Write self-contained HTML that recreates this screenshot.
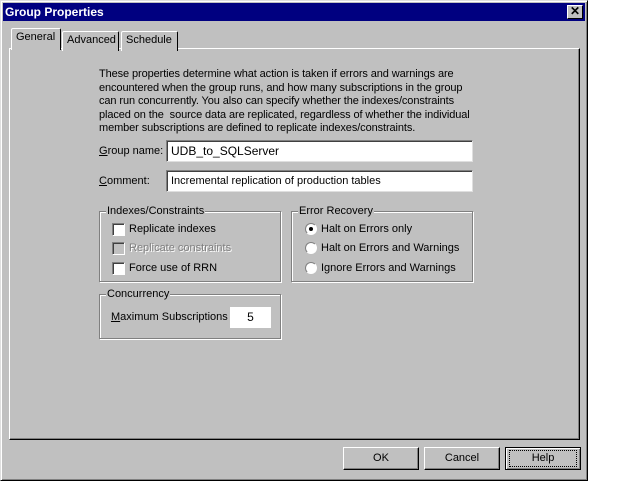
<!DOCTYPE html>
<html><head><style>
*{margin:0;padding:0;box-sizing:border-box}
body{width:640px;height:481px;background:#fff;position:relative;overflow:hidden;font-family:"Liberation Sans",sans-serif;font-size:11px;color:#000}
.a{position:absolute}
.dlg{left:0;top:0;width:588px;height:481px;background:#c0c0c0;border:1px solid #dfdfdf;border-right-color:#000;border-bottom-color:#000;box-shadow:inset 1px 1px #fff,inset -1px -1px #808080}
.title{left:3px;top:3px;width:582px;height:18px;background:#000080;color:#fff;font-weight:bold;font-size:12px;line-height:18px;padding-left:2px}
.close{left:567px;top:5px;width:16px;height:14px;background:#c0c0c0;border:1px solid #fff;border-right-color:#000;border-bottom-color:#000;font-size:12px;line-height:11px;text-align:center;font-weight:bold;color:#000}
.panel{left:9px;top:48px;width:571px;height:392px;border:1px solid #fff;border-right-color:#000;border-bottom-color:#000;box-shadow:inset -1px -1px #808080}
.tab{height:20px;border:1px solid #fff;border-bottom:none;border-right:1px solid #000;border-radius:2px 2px 0 0;padding:0 4px;line-height:17px;background:#c0c0c0}
.in{background:#fff;border:1px solid #808080;border-right-color:#dfdfdf;border-bottom-color:#dfdfdf;box-shadow:inset 1px 1px #404040;padding-left:4px;line-height:18px}
.grp{border:1px solid #808080;box-shadow:1px 1px #fff,inset 1px 1px #fff}
.lg{background:#c0c0c0;padding:0 1px;line-height:12px}
.cb{width:13px;height:13px;background:#fff;border:1px solid #808080;border-right-color:#fff;border-bottom-color:#fff;box-shadow:inset 1px 1px #404040}
.rb{width:12px;height:12px;border-radius:50%;background:#fff;border:1px solid #808080;border-right-color:#fff;border-bottom-color:#fff}
.btn{top:447px;width:76px;height:23px;border:1px solid #fff;border-right-color:#000;border-bottom-color:#000;box-shadow:inset -1px -1px #808080;text-align:center;line-height:21px;font-size:11px}
u{text-decoration:underline}
</style></head><body>
<div class="a dlg"></div>
<div class="a title">Group Properties</div>
<div class="a close">✕</div>
<div class="a panel"></div>
<div class="a tab" style="left:11px;top:28px;height:22px;width:50px;background:#c0c0c0;z-index:2">General</div>
<div class="a tab" style="left:62px;top:31px;width:57px">Advanced</div>
<div class="a tab" style="left:121px;top:31px;width:57px">Schedule</div>
<div class="a" style="left:99px;top:68px;width:380px;line-height:13.5px;letter-spacing:-0.1px">These properties determine what action is taken if errors and warnings are encountered when the group runs, and how many subscriptions in the group can run concurrently. You also can specify whether the indexes/constraints placed on the &nbsp;source data are replicated, regardless of whether the individual member subscriptions are defined to replicate indexes/constraints.</div>
<div class="a" style="left:99px;top:145px"><u>G</u>roup name:</div>
<div class="a in" style="left:166px;top:140px;width:307px;height:22px;font-size:12px;line-height:20px">UDB_to_SQLServer</div>
<div class="a" style="left:99px;top:175px"><u>C</u>omment:</div>
<div class="a in" style="left:166px;top:170px;width:307px;height:22px;line-height:20px">Incremental replication of production tables</div>
<div class="a grp" style="left:99px;top:211px;width:182px;height:71px"></div>
<div class="a lg" style="left:106px;top:205px">Indexes/Constraints</div>
<div class="a cb" style="left:112px;top:223px"></div><div class="a" style="left:129px;top:223px">Replicate indexes</div>
<div class="a cb" style="left:112px;top:242px;background:#c0c0c0"></div><div class="a" style="left:129px;top:242px;color:#808080;text-shadow:1px 1px #fff">Replicate constraints</div>
<div class="a cb" style="left:112px;top:262px"></div><div class="a" style="left:129px;top:262px">Force use of RRN</div>
<div class="a grp" style="left:291px;top:211px;width:182px;height:71px"></div>
<div class="a lg" style="left:298px;top:205px">Error Recovery</div>
<div class="a rb" style="left:305px;top:223px"></div><div class="a" style="left:309px;top:227px;width:4px;height:4px;background:#000;border-radius:50%"></div><div class="a" style="left:321px;top:223px">Halt on Errors only</div>
<div class="a rb" style="left:305px;top:242px"></div><div class="a" style="left:321px;top:242px">Halt on Errors and Warnings</div>
<div class="a rb" style="left:305px;top:262px"></div><div class="a" style="left:321px;top:262px">Ignore Errors and Warnings</div>
<div class="a grp" style="left:99px;top:294px;width:182px;height:45px"></div>
<div class="a lg" style="left:106px;top:288px">Concurrency</div>
<div class="a" style="left:111px;top:311px"><u>M</u>aximum Subscriptions</div>
<div class="a" style="left:230px;top:307px;width:41px;height:21px;background:#fff;text-align:center;line-height:20px;font-size:12px">5</div>
<div class="a btn" style="left:343px">OK</div>
<div class="a btn" style="left:424px">Cancel</div>
<div class="a btn" style="left:505px;border:1px solid #000;box-shadow:inset 1px 1px #fff,inset -1px -1px #808080"><span style="display:block;margin:2px 3px;border:1px dotted #000;line-height:15px">Help</span></div>
</body></html>
